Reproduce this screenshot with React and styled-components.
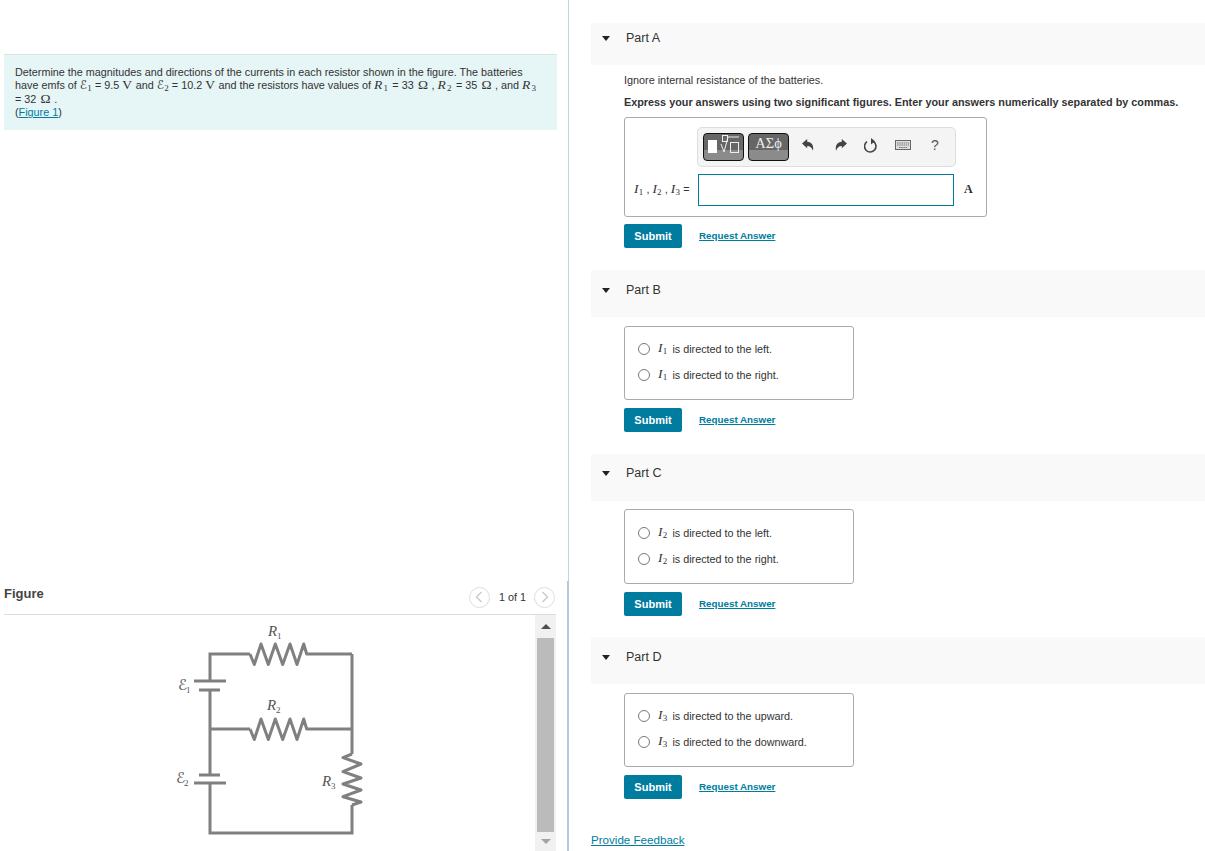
import React from "react";
import styled, { createGlobalStyle } from "styled-components";

const Global = createGlobalStyle`
  html, body { margin: 0; padding: 0; background: #fff; }
  body { font-family: "Liberation Sans", Arial, sans-serif; color: #333; overflow: hidden; }
  * { box-sizing: border-box; }
`;

const Page = styled.div`
  display: flex;
  width: 1205px;
  height: 851px;
  overflow: hidden;
`;

const LeftColumn = styled.div`
  width: 567px;
  height: 851px;
  flex: none;
  display: flex;
  flex-direction: column;
  padding: 54px 11px 0 4px;
`;

const Divider = styled.div`
  width: 2px;
  height: 851px;
  flex: none;
  display: flex;
  flex-direction: column;
  align-items: flex-end;
`;

const DividerTop = styled.div`
  width: 1px;
  height: 581px;
  background: #c3d3de;
`;

const DividerBottom = styled.div`
  width: 2px;
  flex: 1;
  background: #b4c9e0;
`;

const Prompt = styled.div`
  height: 76px;
  margin-right: -1px;
  background: #e6f5f6;
  border-top: 1px solid #dce3e4;
  padding: 11px 11px 0;
  font-size: 10.8px;
  line-height: 13.4px;
  color: #333;
`;

const MathVar = styled.span`
  font-family: "Liberation Serif", serif;
  font-style: ${(p) => (p.$plain ? "normal" : "italic")};
  font-size: ${(p) => p.$size || 13.5}px;
  line-height: 0;
  color: ${(p) => p.$color || "#333"};
  letter-spacing: ${(p) => (p.$plain ? "0.6px" : "0.2px")};
  sub {
    font-size: 9px;
    font-style: normal;
    line-height: 0;
    vertical-align: -2px;
  }
`;

const ResistorVar = styled(MathVar)`
  letter-spacing: 1.3px;
`;

const OhmVar = styled(MathVar)`
  margin-left: 1.2px;
`;

const ScriptLetter = styled.span`
  font-family: "DejaVu Sans", sans-serif;
  font-size: 12px;
`;

const TextLink = styled.a`
  color: #007c9f;
  text-decoration: underline;
`;

const FigureHeader = styled.div`
  margin-top: 452px;
  height: 33px;
  display: flex;
  align-items: center;
  justify-content: space-between;
  border-bottom: 1px solid #ddd;
  padding-bottom: 10px;
`;

const FigureTitle = styled.div`
  font-size: 13px;
  font-weight: bold;
  color: #444;
`;

const Pager = styled.div`
  display: flex;
  align-items: center;
  font-size: 10.8px;
  color: #333;
  padding: 8px 1px 0 0;
`;

const PagerCount = styled.span`
  margin: 0 8px 0 9px;
`;

const PagerButton = styled.span`
  width: 21px;
  height: 21px;
  border: 1px solid #ddd;
  border-radius: 50%;
  display: flex;
  align-items: center;
  justify-content: center;
`;

const FigureBody = styled.div`
  flex: 1;
  display: flex;
  min-height: 0;
`;

const FigureCanvas = styled.div`
  flex: 1;
  padding-left: 156px;
`;

const Scrollbar = styled.div`
  width: 21px;
  display: flex;
  flex-direction: column;
  align-items: center;
  background: #f1f1f1;
  padding-top: 9px;
`;

const ScrollThumb = styled.div`
  width: 17px;
  height: 194px;
  margin-top: 9px;
  background: #bbb;
`;

const ScrollArrow = styled.div`
  width: 0;
  height: 0;
  border-left: 5px solid transparent;
  border-right: 5px solid transparent;
  ${(p) => (p.$down ? "border-top: 5px solid #a3a3a3; margin-top: 7px;" : "border-bottom: 5px solid #505050;")}
`;

const RightColumn = styled.div`
  flex: 1;
  padding: 23px 0 0 22px;
  min-width: 0;
`;

const PartBar = styled.div`
  height: ${(p) => p.$h || 47}px;
  background: #f9f9f9;
  display: flex;
  align-items: flex-start;
  padding: ${(p) => p.$top || 13}px 0 0 11px;
  font-size: 12.5px;
  color: #333;
  margin-bottom: ${(p) => p.$gap || 9}px;
`;

const Caret = styled.span`
  width: 0;
  height: 0;
  margin: 5px 16px 0 0;
  border-left: 4.5px solid transparent;
  border-right: 4.5px solid transparent;
  border-top: 5px solid #222;
`;

const PartBody = styled.div`
  padding-left: 33px;
  margin-bottom: ${(p) => p.$mb || 22}px;
`;

const Instruction = styled.div`
  font-size: 10.83px;
  line-height: 13px;
  font-weight: ${(p) => (p.$bold ? "bold" : "normal")};
  margin-bottom: ${(p) => p.$mb || 0}px;
`;

const AnswerBox = styled.div`
  width: 363px;
  height: 100px;
  border: 1px solid #aaa;
  border-radius: 3px;
  padding: 9px 0 0 9px;
`;

const Toolbar = styled.div`
  width: 259px;
  height: 40px;
  margin-left: 63px;
  background: #f4f4f4;
  border: 1px solid #ddd;
  border-radius: 5px;
  display: flex;
  align-items: center;
  padding-left: 5px;
`;

const TemplateButton = styled.div`
  width: 41px;
  height: 28px;
  border: 1px solid #111;
  border-radius: 4px;
  background: linear-gradient(#666 0, #666 61%, #8b8b8b 61%, #8b8b8b 100%);
  display: flex;
  align-items: flex-start;
  justify-content: center;
  & + & {
    margin-left: 4px;
  }
`;

const GreekLabel = styled.span`
  font-family: "Liberation Serif", serif;
  font-size: 14.5px;
  line-height: 18px;
  color: #eee;
`;

const ToolIcon = styled.div`
  width: ${(p) => p.$w}px;
  display: flex;
  justify-content: center;
  margin-bottom: 4px;
  font-size: 14px;
  color: #555;
`;

const InputRow = styled.div`
  display: flex;
  align-items: center;
  margin-top: 7px;
`;

const EqLabel = styled.div`
  width: 64px;
  margin-bottom: 2px;
  white-space: nowrap;
  font-size: 10.8px;
  color: #333;
`;

const AnswerInput = styled.div`
  width: 256px;
  height: 32px;
  border: 1px solid #007c9f;
  background: #fff;
`;

const Unit = styled.div`
  margin: 0 0 2px 10px;
  font-family: "Liberation Serif", serif;
  font-weight: bold;
  font-size: 12px;
  color: #333;
`;

const Actions = styled.div`
  display: flex;
  align-items: center;
  margin-top: ${(p) => p.$mt || 8}px;
`;

const SubmitButton = styled.button`
  width: 58px;
  height: 24px;
  padding: 0;
  border: none;
  border-radius: 2px;
  background: #007c9f;
  color: #fff;
  font-family: "Liberation Sans", Arial, sans-serif;
  font-size: 11px;
  font-weight: bold;
`;

const RequestLink = styled.a`
  margin: 0 0 2px 17px;
  font-size: 9.8px;
  font-weight: bold;
  color: #007c9f;
  text-decoration: underline;
`;

const ChoiceBox = styled.div`
  width: 230px;
  height: ${(p) => p.$h || 74}px;
  border: 1px solid #aaa;
  border-radius: 3px;
  padding: ${(p) => p.$pad || 9}px 0 0 13px;
`;

const Choice = styled.div`
  height: 26px;
  display: flex;
  align-items: center;
  font-size: 10.8px;
  color: #333;
  white-space: nowrap;
`;

const ChoiceText = styled.span`
  margin-left: 5px;
`;

const Radio = styled.span`
  width: 12px;
  height: 12px;
  border: 1px solid #777;
  border-radius: 50%;
  margin-right: 8px;
  flex: none;
`;

const Feedback = styled.a`
  display: block;
  font-size: 11.6px;
  color: #007c9f;
  text-decoration: underline;
`;

const CircuitLabels = styled.g`
  font-family: "Liberation Serif", serif;
  font-style: italic;
  font-size: 15px;
  fill: #555;
`;

const I = ({ n }) => (
  <MathVar>
    I<sub>{n}</sub>
  </MathVar>
);
const R = ({ n }) => (
  <ResistorVar>
    R<sub>{n}</sub>
  </ResistorVar>
);
const E = ({ n }) => (
  <MathVar>
    <ScriptLetter>ℰ</ScriptLetter>
    <sub>{n}</sub>
  </MathVar>
);
const V = () => <MathVar $plain>V</MathVar>;
const Ohm = () => <OhmVar $plain>Ω</OhmVar>;

const zigH = (y) => {
  const lo = y + 10.5;
  const hi = y - 10;
  return `M250 ${y}L254.3 ${lo}L261 ${hi}L268.3 ${lo}L275.3 ${hi}L282.7 ${lo}L290 ${hi}L297 ${lo}L303.7 ${hi}L306.7 ${y}H352`;
};

const Circuit = () => (
  <svg width="220" height="236" viewBox="160 615 220 236" style={{ display: "block" }}>
    <g fill="none" stroke="#808080" strokeWidth="3">
      <path d="M210 681V654H250" />
      <path d={zigH(654)} strokeLinejoin="round" />
      <path d="M352 654V754" />
      <path d="M210 690V775M210 783V833H352V805" />
      <path d="M210 729H250" />
      <path d={zigH(729)} strokeLinejoin="round" />
      <path d="M194 681H226M199 690H220M199 775H220M194 783H226" />
      <path
        d="M352 754L343 757.7L361 764L343 771.7L361 778L343 784L361 790L343 796.7L361 802L352 805"
        strokeLinejoin="round"
      />
    </g>
    <CircuitLabels>
      <text x="268" y="636">R</text>
      <text x="277" y="639" fontSize="9" fontStyle="normal">1</text>
      <text x="267" y="710">R</text>
      <text x="276" y="713" fontSize="9" fontStyle="normal">2</text>
      <text x="322" y="786">R</text>
      <text x="331" y="789" fontSize="9" fontStyle="normal">3</text>
      <text x="178" y="690" fontFamily="DejaVu Sans">ℰ</text>
      <text x="186" y="693" fontSize="9" fontStyle="normal">1</text>
      <text x="176" y="783" fontFamily="DejaVu Sans">ℰ</text>
      <text x="184" y="786" fontSize="9" fontStyle="normal">2</text>
    </CircuitLabels>
  </svg>
);

const Chevron = ({ left }) => (
  <svg width="8" height="12" viewBox="0 0 8 12">
    <path d={left ? "M6.5 1L1.5 6L6.5 11" : "M1.5 1L6.5 6L1.5 11"} fill="none" stroke="#ccc" strokeWidth="1.5" />
  </svg>
);

const ChoicePart = ({ label, n, a, b, mb, barTop, barGap, boxH, boxPad }) => (
  <>
    <PartBar $top={barTop} $gap={barGap}>
      <Caret />
      {label}
    </PartBar>
    <PartBody $mb={mb}>
      <ChoiceBox $h={boxH} $pad={boxPad}>
        <Choice>
          <Radio />
          <I n={n} />
          <ChoiceText>is directed to the {a}.</ChoiceText>
        </Choice>
        <Choice>
          <Radio />
          <I n={n} />
          <ChoiceText>is directed to the {b}.</ChoiceText>
        </Choice>
      </ChoiceBox>
      <Actions>
        <SubmitButton>Submit</SubmitButton>
        <RequestLink>Request Answer</RequestLink>
      </Actions>
    </PartBody>
  </>
);

export default function App() {
  return (
    <Page>
      <Global />
      <LeftColumn>
        <Prompt>
          Determine the magnitudes and directions of the currents in each resistor shown in the figure. The batteries
          <br />
          have emfs of <E n={1} /> = 9.5 <V /> and <E n={2} /> = 10.2 <V /> and the resistors have values of <R n={1} /> = 33 <Ohm /> , <R n={2} /> = 35 <Ohm /> , and <R n={3} />
          <br />= 32 <Ohm /> .
          <br />
          (<TextLink>Figure 1</TextLink>)
        </Prompt>
        <FigureHeader>
          <FigureTitle>Figure</FigureTitle>
          <Pager>
            <PagerButton>
              <Chevron left />
            </PagerButton>
            <PagerCount>1 of 1</PagerCount>
            <PagerButton>
              <Chevron />
            </PagerButton>
          </Pager>
        </FigureHeader>
        <FigureBody>
          <FigureCanvas>
            <Circuit />
          </FigureCanvas>
          <Scrollbar>
            <ScrollArrow />
            <ScrollThumb />
            <ScrollArrow $down />
          </Scrollbar>
        </FigureBody>
      </LeftColumn>
      <Divider>
        <DividerTop />
        <DividerBottom />
      </Divider>
      <RightColumn>
        <PartBar $h={42} $top={8} $gap={9}>
          <Caret />
          Part A
        </PartBar>
        <PartBody>
          <Instruction $mb={9}>Ignore internal resistance of the batteries.</Instruction>
          <Instruction $bold $mb={8}>
            Express your answers using two significant figures. Enter your answers numerically separated by commas.
          </Instruction>
          <AnswerBox>
            <Toolbar>
              <TemplateButton>
                <svg width="39" height="26" viewBox="0 0 39 26">
                  <rect x="4" y="6" width="9" height="13" fill="#fff" />
                  <rect x="18.5" y="1.5" width="5" height="6" fill="none" stroke="#eee" />
                  <path d="M17 10L20 18L24 3H35" fill="none" stroke="#eee" />
                  <rect x="26.5" y="8.5" width="8" height="10" fill="none" stroke="#eee" />
                </svg>
              </TemplateButton>
              <TemplateButton>
                <GreekLabel>ΑΣϕ</GreekLabel>
              </TemplateButton>
              <ToolIcon $w={38}>
                <svg width="12" height="12" viewBox="0 0 12 12">
                  <path d="M0 4.5L5.2 0V2.8C9.5 3 12 6.2 11 11.8C9.8 8.6 8.2 7 5.2 7V9.2Z" fill="#444" />
                </svg>
              </ToolIcon>
              <ToolIcon $w={28}>
                <svg width="12" height="12" viewBox="0 0 12 12">
                  <path d="M12 4.5L6.8 0V2.8C2.5 3 0 6.2 1 11.8C2.2 8.6 3.8 7 6.8 7V9.2Z" fill="#444" />
                </svg>
              </ToolIcon>
              <ToolIcon $w={32}>
                <svg width="14" height="15" viewBox="0 0 14 15">
                  <path d="M9 3.3A5.7 5.7 0 1 1 3 3.6" fill="none" stroke="#444" strokeWidth="1.6" />
                  <path d="M7 0V6.5L11 3.2Z" fill="#444" />
                </svg>
              </ToolIcon>
              <ToolIcon $w={32}>
                <svg width="16" height="10" viewBox="0 0 16 10">
                  <rect x="0.5" y="0.5" width="15" height="9" fill="#ddd" stroke="#666" />
                  <path d="M2 3H14M2 5H14M4 7.5H12" stroke="#777" strokeDasharray="1.5 0.7" />
                </svg>
              </ToolIcon>
              <ToolIcon $w={32}>?</ToolIcon>
            </Toolbar>
            <InputRow>
              <EqLabel>
                <I n={1} /> , <I n={2} /> , <I n={3} /> =
              </EqLabel>
              <AnswerInput />
              <Unit>A</Unit>
            </InputRow>
          </AnswerBox>
          <Actions $mt={7}>
            <SubmitButton>Submit</SubmitButton>
            <RequestLink>Request Answer</RequestLink>
          </Actions>
        </PartBody>
        <ChoicePart label="Part B" n={1} a="left" b="right" mb={22} />
        <ChoicePart label="Part C" n={2} a="left" b="right" mb={21} barTop={12} barGap={8} boxH={75} boxPad={10} />
        <ChoicePart label="Part D" n={3} a="upward" b="downward" mb={34} />
        <Feedback>Provide Feedback</Feedback>
      </RightColumn>
    </Page>
  );
}
